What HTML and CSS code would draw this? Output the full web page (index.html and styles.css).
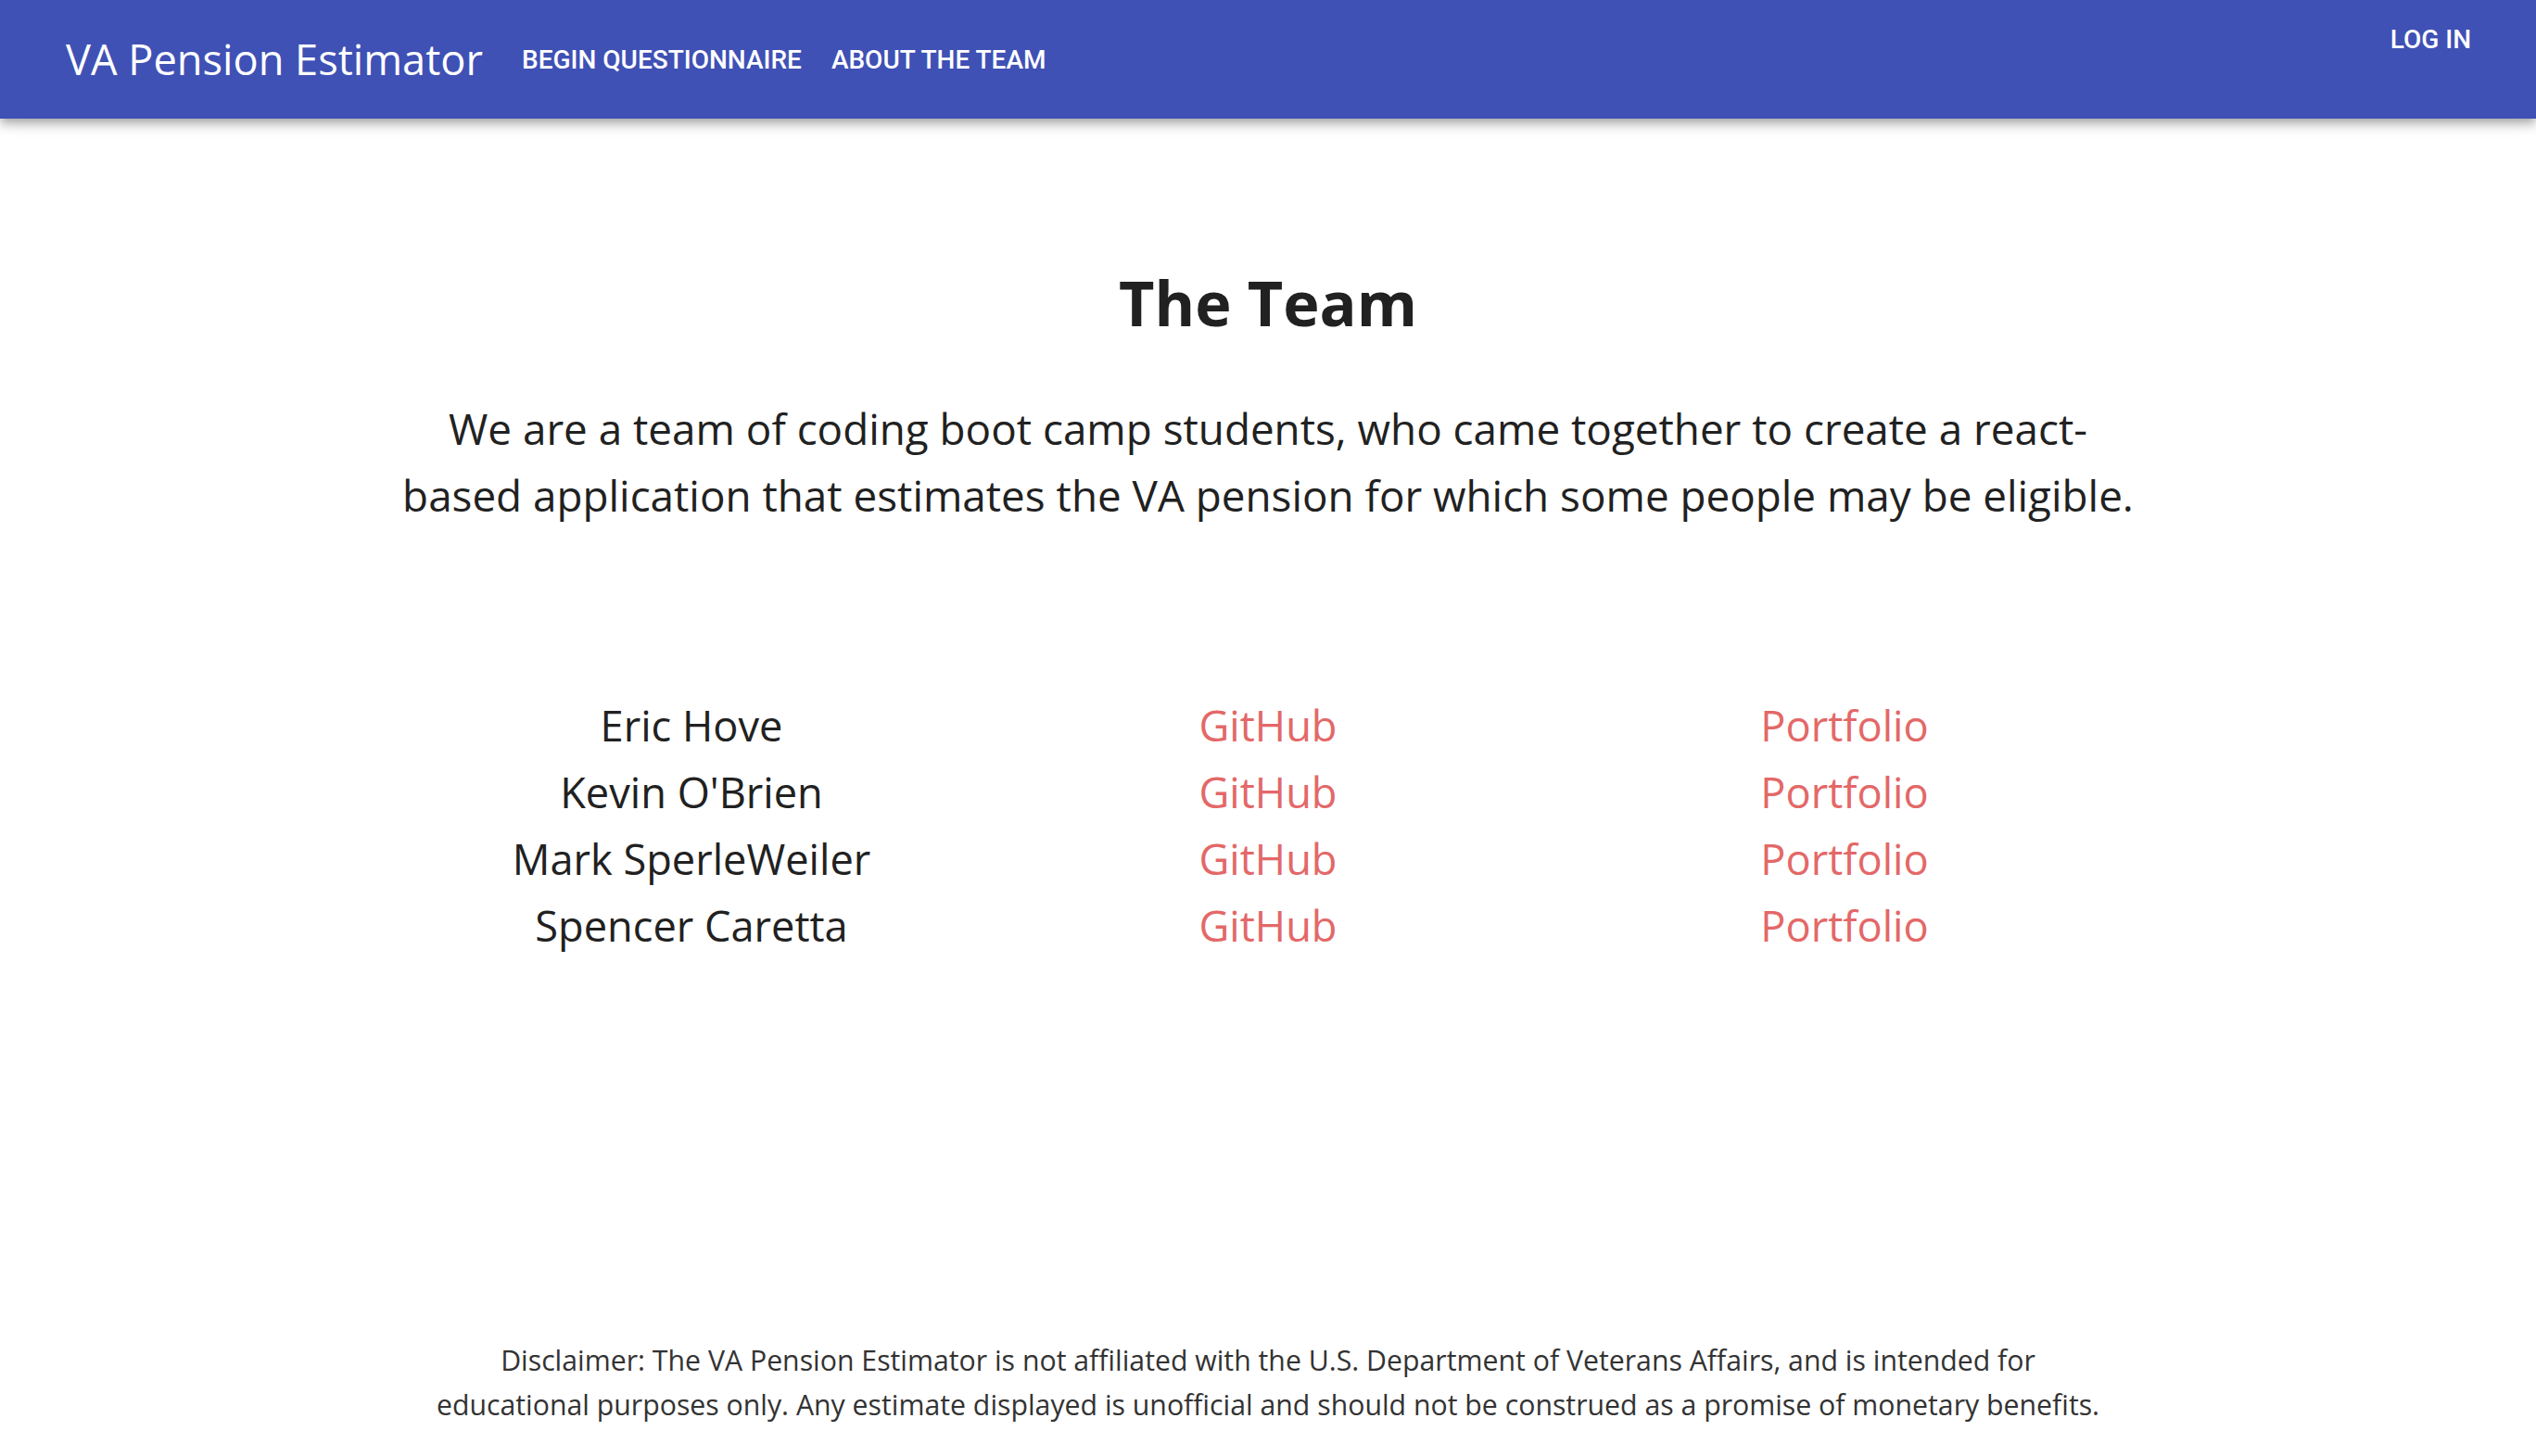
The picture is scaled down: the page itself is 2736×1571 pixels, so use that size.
FILE: index.html
```html
<!DOCTYPE html>
<html lang="en">
<head>
<meta charset="utf-8">
<title>VA Pension Estimator - The Team</title>
<link rel="stylesheet" href="styles.css">
</head>
<body>
<header class="appbar">
  <div class="toolbar">
    <div class="brand">VA Pension Estimator</div>
    <nav class="nav">
      <a class="nav-btn" href="#">Begin Questionnaire</a>
      <a class="nav-btn" href="#">About the Team</a>
    </nav>
    <div class="spacer"></div>
    <a class="nav-btn login" href="#">Log In</a>
  </div>
</header>
<main class="content">
  <h1 class="title">The Team</h1>
  <p class="intro">We are a team of coding boot camp students, who came together to create a react-based application that estimates the VA pension for which some people may be eligible.</p>
  <div class="team">
    <div class="member">Eric Hove</div><a class="link" href="#">GitHub</a><a class="link" href="#">Portfolio</a>
    <div class="member">Kevin O'Brien</div><a class="link" href="#">GitHub</a><a class="link" href="#">Portfolio</a>
    <div class="member">Mark SperleWeiler</div><a class="link" href="#">GitHub</a><a class="link" href="#">Portfolio</a>
    <div class="member">Spencer Caretta</div><a class="link" href="#">GitHub</a><a class="link" href="#">Portfolio</a>
  </div>
</main>
<footer class="disclaimer">
  <p class="disclaimer-text">Disclaimer: The VA Pension Estimator is not affiliated with the U.S. Department of Veterans Affairs, and is intended for educational purposes only. Any estimate displayed is unofficial and should not be construed as a promise of monetary benefits.</p>
</footer>
</body>
</html>
```
FILE: styles.css
```css
html, body {
  margin: 0;
  padding: 0;
}
body {
  min-height: 100vh;
  display: flex;
  flex-direction: column;
  background: #ffffff;
  font-family: "Open Sans", "Noto Sans", "Liberation Sans", sans-serif;
  color: #212121;
}
.appbar {
  background: #3f51b5;
  color: #ffffff;
  box-shadow: 0 4px 8px -2px rgba(0,0,0,0.2), 0 8px 10px 0 rgba(0,0,0,0.14), 0 2px 20px 0 rgba(0,0,0,0.12);
  position: relative;
  z-index: 2;
}
.toolbar {
  height: 128px;
  display: flex;
  align-items: center;
  padding: 0 54px 0 71px;
}
.brand {
  font-size: 45.2px;
  font-weight: 400;
  line-height: 1.6;
  margin-right: 26px;
}
.nav {
  display: flex;
}
.nav-btn {
  font-family: Roboto, "Liberation Sans", sans-serif;
  font-size: 28px;
  font-weight: 500;
  line-height: 49px;
  letter-spacing: 0;
  text-transform: uppercase;
  color: #ffffff;
  text-decoration: none;
  padding: 12px 16px;
}
.spacer {
  flex: 1;
}
.login {
  align-self: flex-start;
  margin-top: 6px;
}
.content {
  width: 1878px;
  margin: 0 auto;
  text-align: center;
}
.title {
  font-size: 66.5px;
  font-weight: 700;
  line-height: 82px;
  margin: 157px 0 0;
}
.intro {
  font-size: 45.8px;
  line-height: 72px;
  margin: 59px 0 0;
}
.team {
  width: 1866px;
  margin: 177px auto 0;
  display: grid;
  grid-template-columns: repeat(3, 1fr);
  font-size: 45.2px;
  line-height: 72px;
}
.link {
  color: #e36868;
  text-decoration: none;
}
.disclaimer {
  margin-top: auto;
  padding-bottom: 31px;
  display: flex;
  justify-content: center;
}
.disclaimer-text {
  width: 1810px;
  margin: 0;
  text-align: center;
  font-size: 30.25px;
  line-height: 48px;
  color: #333333;
}
```
